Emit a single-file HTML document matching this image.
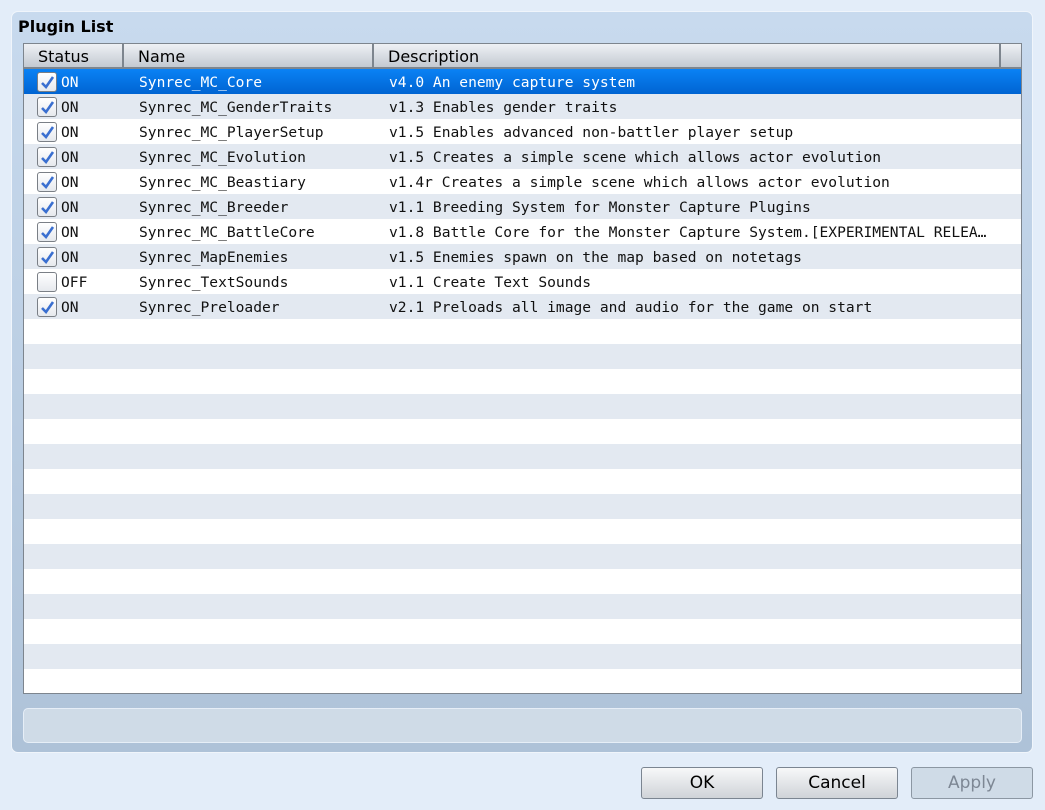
<!DOCTYPE html>
<html><head><style>
body{margin:0;width:1045px;height:810px;background:#e3edf9;position:relative;overflow:hidden;font-family:"DejaVu Sans","Liberation Sans",sans-serif;}
.panel{position:absolute;left:11px;top:11px;width:1022px;height:742px;border-radius:7px;background:linear-gradient(#c8daee,#aec2d8);border:1px solid #f0f5fb;box-sizing:border-box;}
.title{position:absolute;left:18px;top:17px;font-weight:bold;font-size:16px;color:#000;}
.list{position:absolute;left:23px;top:43px;width:999px;height:651px;border:1px solid #7d858e;box-sizing:border-box;background:#fff;overflow:hidden;}
.hdr{position:absolute;left:0;top:0;width:100%;height:25px;background:linear-gradient(#eef1f5,#c3c9d1);border-bottom:2px solid #7d858e;box-sizing:border-box;font-size:16px;}
.hdr div{position:absolute;top:0;height:23px;line-height:26px;border-right:2px solid #7d858e;box-sizing:border-box;padding-left:14px;}
.row{position:absolute;left:0;width:100%;height:25px;font-family:"DejaVu Sans Mono","Liberation Mono",monospace;font-size:14.6px;line-height:27px;color:#111;white-space:nowrap;}
.row.a{background:#e3e9f1}
.row.sel{background:linear-gradient(#0a82f5,#0064d2);color:#fff}
.cb{position:absolute;left:13px;top:3px;width:18px;height:18px;border:1px solid #7a7f86;border-radius:3px;background:linear-gradient(#fff,#e6e9ee);}
.cb svg{position:absolute;left:2px;top:2px}
.st{position:absolute;left:37px}
.nm{position:absolute;left:115px}
.ds{position:absolute;left:365px}
.status{position:absolute;left:23px;top:708px;width:999px;height:35px;border:1px solid #e6eef7;border-radius:5px;background:#cfdbe7;box-sizing:border-box;}
.btn{position:absolute;top:767px;width:122px;height:32px;border:1px solid #7b8591;border-radius:3px;box-sizing:border-box;background:linear-gradient(#f7f8f9,#cfd3d8);text-align:center;line-height:31px;font-size:17px;color:#000;}
.btn.dis{background:#cfdbe7;color:#7d8794;border-color:#8c97a3}
</style></head><body>
<div class="panel"></div>
<div class="title">Plugin List</div>
<div class="list">
<div class="hdr"><div style="left:0;width:100px">Status</div><div style="left:100px;width:250px">Name</div><div style="left:350px;width:627px">Description</div></div>
<div class="row sel" style="top:25px"><div class="cb"><svg width="15" height="15"><path d="M2 8 L6 12 L13 2" stroke="#3a6fd0" stroke-width="2.6" fill="none"/></svg></div><span class="st">ON</span><span class="nm">Synrec_MC_Core</span><span class="ds">v4.0 An enemy capture system</span></div>
<div class="row a" style="top:50px"><div class="cb"><svg width="15" height="15"><path d="M2 8 L6 12 L13 2" stroke="#3a6fd0" stroke-width="2.6" fill="none"/></svg></div><span class="st">ON</span><span class="nm">Synrec_MC_GenderTraits</span><span class="ds">v1.3 Enables gender traits</span></div>
<div class="row" style="top:75px"><div class="cb"><svg width="15" height="15"><path d="M2 8 L6 12 L13 2" stroke="#3a6fd0" stroke-width="2.6" fill="none"/></svg></div><span class="st">ON</span><span class="nm">Synrec_MC_PlayerSetup</span><span class="ds">v1.5 Enables advanced non-battler player setup</span></div>
<div class="row a" style="top:100px"><div class="cb"><svg width="15" height="15"><path d="M2 8 L6 12 L13 2" stroke="#3a6fd0" stroke-width="2.6" fill="none"/></svg></div><span class="st">ON</span><span class="nm">Synrec_MC_Evolution</span><span class="ds">v1.5 Creates a simple scene which allows actor evolution</span></div>
<div class="row" style="top:125px"><div class="cb"><svg width="15" height="15"><path d="M2 8 L6 12 L13 2" stroke="#3a6fd0" stroke-width="2.6" fill="none"/></svg></div><span class="st">ON</span><span class="nm">Synrec_MC_Beastiary</span><span class="ds">v1.4r Creates a simple scene which allows actor evolution</span></div>
<div class="row a" style="top:150px"><div class="cb"><svg width="15" height="15"><path d="M2 8 L6 12 L13 2" stroke="#3a6fd0" stroke-width="2.6" fill="none"/></svg></div><span class="st">ON</span><span class="nm">Synrec_MC_Breeder</span><span class="ds">v1.1 Breeding System for Monster Capture Plugins</span></div>
<div class="row" style="top:175px"><div class="cb"><svg width="15" height="15"><path d="M2 8 L6 12 L13 2" stroke="#3a6fd0" stroke-width="2.6" fill="none"/></svg></div><span class="st">ON</span><span class="nm">Synrec_MC_BattleCore</span><span class="ds">v1.8 Battle Core for the Monster Capture System.[EXPERIMENTAL RELEA…</span></div>
<div class="row a" style="top:200px"><div class="cb"><svg width="15" height="15"><path d="M2 8 L6 12 L13 2" stroke="#3a6fd0" stroke-width="2.6" fill="none"/></svg></div><span class="st">ON</span><span class="nm">Synrec_MapEnemies</span><span class="ds">v1.5 Enemies spawn on the map based on notetags</span></div>
<div class="row" style="top:225px"><div class="cb"></div><span class="st">OFF</span><span class="nm">Synrec_TextSounds</span><span class="ds">v1.1 Create Text Sounds</span></div>
<div class="row a" style="top:250px"><div class="cb"><svg width="15" height="15"><path d="M2 8 L6 12 L13 2" stroke="#3a6fd0" stroke-width="2.6" fill="none"/></svg></div><span class="st">ON</span><span class="nm">Synrec_Preloader</span><span class="ds">v2.1 Preloads all image and audio for the game on start</span></div>
<div class="row a" style="top:300px"></div><div class="row a" style="top:350px"></div><div class="row a" style="top:400px"></div><div class="row a" style="top:450px"></div><div class="row a" style="top:500px"></div><div class="row a" style="top:550px"></div><div class="row a" style="top:600px"></div>
</div>
<div class="status"></div>
<div class="btn" style="left:641px">OK</div>
<div class="btn" style="left:776px">Cancel</div>
<div class="btn dis" style="left:911px">Apply</div>
</body></html>
